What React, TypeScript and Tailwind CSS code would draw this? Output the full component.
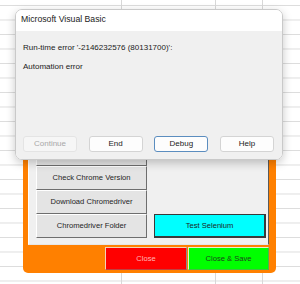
function FormButton(props: {label: string}) {
    return <div className="h-[24px] flex items-center justify-center bg-[#e4e4e4] border border-t-white border-l-white border-r-[#6e6e6e] border-b-[#6e6e6e] text-[7.6px] text-[#1e1e1e]">
        {props.label}
    </div>
}

function DialogButton(props: {label: string, disabled?: boolean, focused?: boolean}) {
    let cls = "w-[54px] h-[16px] rounded-[3px] flex items-center justify-center text-[8px] ";
    if (props.disabled) {
        cls += "bg-[#f6f6f6] border border-[#e4e4e4] text-[#a8a8a8]";
    } else if (props.focused) {
        cls += "bg-[#fdfdfd] border border-[#5b8dbf] text-[#1b1b1b]";
    } else {
        cls += "bg-[#fdfdfd] border border-[#d4d4d4] text-[#1b1b1b]";
    }
    return <div className={cls}>{props.label}</div>
}

function UserForm() {
    return <div className="absolute left-[23px] top-[60px] w-[253px] h-[213px] bg-[#ff8000] rounded-b-[5px] flex flex-col pl-[5px] pr-[7px] pb-[3px]">
        <div className="flex-1 flex items-end bg-[#f0f0f0] border-l border-l-white border-r border-r-[#5a5a5a] border-b border-b-[#e6e6e6] pl-[7px] pr-[2px] pb-[6px]">
            <div className="w-[111px] flex flex-col">
                <FormButton label="Install Selenium" />
                <FormButton label="Check Chrome Version" />
                <FormButton label="Download Chromedriver" />
                <FormButton label="Chromedriver Folder" />
            </div>
            <div className="w-[112px] ml-[7px]">
                <div className="h-[24px] flex items-center justify-center bg-[#00ffff] border border-[#3a3a3a] border-r-2 border-b-2 text-[7.6px] text-[#1e1e1e]">
                    Test Selenium
                </div>
            </div>
        </div>
        <div className="flex justify-end gap-[1px] mt-[2px] h-[23px]">
            <div className="w-[82px] flex items-center justify-center bg-[#ff0000] border border-t-[#f3d2b8] border-l-[#f3d2b8] border-r-[#8a8a8a] border-b-[#c04040] text-[7.6px] text-[#ffb8b8]">
                Close
            </div>
            <div className="w-[81px] flex items-center justify-center bg-[#00ff00] border border-t-[#e6f0d0] border-l-[#e6f0d0] border-r-[#4caf50] border-b-[#40c040] text-[7.6px] text-[#1f3f1f]">
                Close &amp; Save
            </div>
        </div>
    </div>
}

function ErrorDialog() {
    return <div className="absolute left-[15px] top-[9px] w-[268px] h-[151px] rounded-[7px] border border-[#c9c9c9] overflow-hidden flex flex-col shadow-[0_3px_10px_rgba(0,0,0,0.22)]">
        <div className="h-[21px] bg-white flex items-center pl-[5px] pb-[2px] text-[8.7px] text-[#1a1a1a]">
            Microsoft Visual Basic
        </div>
        <div className="flex-1 bg-[#f0f0f0] flex flex-col pl-[7px] pr-[8px] pb-[7px] text-[#1a1a1a]">
            <div className="mt-[12px] text-[8px] leading-[10px]">Run-time error '-2146232576 (80131700)':</div>
            <div className="mt-[9px] text-[8px] leading-[10px]">Automation error</div>
            <div className="flex-1"></div>
            <div className="flex justify-between">
                <DialogButton label="Continue" disabled />
                <DialogButton label="End" />
                <DialogButton label="Debug" focused />
                <DialogButton label="Help" />
            </div>
        </div>
    </div>
}

export default function App() {
    return <div className="relative w-[300px] h-[284px] overflow-hidden bg-white bg-[linear-gradient(to_right,#d8d8d8_1px,transparent_1px),linear-gradient(to_bottom,#dcdcdc_1px,transparent_1px)] bg-[size:47px_14.5px] bg-[position:27px_5px] font-['Liberation_Sans',Arial,sans-serif]">
        <UserForm />
        <ErrorDialog />
    </div>
}
